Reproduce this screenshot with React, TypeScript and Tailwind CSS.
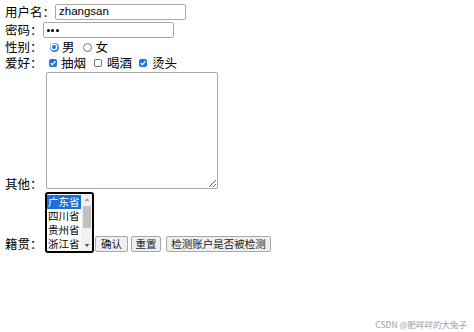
import React from "react";

const FONT = { fontFamily: '"Noto Sans CJK SC", "Noto Sans", sans-serif' };

function Radio({ checked }: { checked?: boolean }) {
  return checked ? (
    <span className="flex items-center justify-center w-[9px] h-[9px] rounded-full bg-[#1a73e8]">
      <span className="block w-[4px] h-[4px] rounded-full bg-[#1a73e8] ring-[1.5px] ring-white" />
    </span>
  ) : (
    <span className="block w-[9px] h-[9px] rounded-full border border-[#767676] bg-white" />
  );
}

function Check({ checked }: { checked?: boolean }) {
  return checked ? (
    <span className="flex items-center justify-center w-[8px] h-[8px] rounded-[2px] bg-[#1a73e8]">
      <svg viewBox="0 0 8 8" className="w-[8px] h-[8px]">
        <path d="M1.6 4.1 L3.3 5.8 L6.4 2.3" fill="none" stroke="white" strokeWidth="1.3" />
      </svg>
    </span>
  ) : (
    <span className="block w-[8px] h-[8px] rounded-[2px] border border-[#767676] bg-white" />
  );
}

function Btn({ w, children }: { w: string; children: React.ReactNode }) {
  return (
    <div
      className={`${w} h-[16px] flex items-center justify-center border border-[#a8a8a8] rounded-[2px] bg-[#efefef] text-[10.5px] text-[#222]`}
    >
      {children}
    </div>
  );
}

const provinces = ["广东省", "四川省", "贵州省", "浙江省"];

export default function App() {
  return (
    <div className="relative w-[474px] h-[332px] bg-white text-black text-[12.5px] leading-none overflow-hidden" style={FONT}>
      <div className="flex flex-col pl-[5px] pt-[4px]">
        {/* 用户名 */}
        <div className="flex items-center h-[16px]">
          <span>用户名：</span>
          <div className="w-[131px] h-[16px] border border-[#a9a9a9] rounded-[2px] flex items-center px-[3px] text-[11.5px]" style={{ fontFamily: '"Liberation Sans", Arial, sans-serif' }}>
            zhangsan
          </div>
        </div>
        {/* 密码 */}
        <div className="flex items-center h-[16px] mt-[2px]">
          <span>密码：</span>
          <div className="w-[131px] h-[16px] border border-[#a9a9a9] rounded-[2px] flex items-center gap-[1.5px] px-[3px]">
            <span className="block w-[3px] h-[3px] rounded-full bg-black" />
            <span className="block w-[3px] h-[3px] rounded-full bg-black" />
            <span className="block w-[3px] h-[3px] rounded-full bg-black" />
          </div>
        </div>
        {/* 性别 */}
        <div className="flex items-center h-[16px] mt-[1px]">
          <span>性别：</span>
          <span className="ml-[7px]"><Radio checked /></span>
          <span className="ml-[3.5px]">男</span>
          <span className="ml-[8.5px]"><Radio /></span>
          <span className="ml-[3.5px]">女</span>
        </div>
        {/* 爱好 */}
        <div className="flex items-center h-[16px]">
          <span>爱好：</span>
          <span className="ml-[6.5px]"><Check checked /></span>
          <span className="ml-[4px]">抽烟</span>
          <span className="ml-[8px]"><Check /></span>
          <span className="ml-[5px]">喝酒</span>
          <span className="ml-[7px]"><Check checked /></span>
          <span className="ml-[5px]">烫头</span>
        </div>
        {/* 其他 */}
        <div className="flex items-end mt-[1px]">
          <span className="mb-[-1px]">其他：</span>
          <textarea
            readOnly
            className="ml-[3.5px] w-[172px] h-[117px] border border-[#a9a9a9] rounded-[2px] resize outline-none"
          />
        </div>
        {/* 籍贯 */}
        <div className="flex items-end mt-[3px]">
          <span className="mb-[3px]">籍贯：</span>
          <div className="ml-[2.5px] w-[49px] h-[61px] border-2 border-black rounded-[3px] flex text-[10.5px]">
            <div className="flex-1 flex flex-col pt-[1px]">
              {provinces.map((p, i) => (
                <div
                  key={p}
                  className={`h-[15px] flex items-center pl-[1px] ${i === 0 ? "bg-[#1a6fd8] text-white" : ""}`}
                >
                  {p}
                </div>
              ))}
            </div>
            <div className="w-[11px] flex flex-col items-center bg-[#f1f1f1]">
              <svg viewBox="0 0 8 6" className="w-[6px] h-[5px] mt-[3px]">
                <path d="M1 5 L4 1 L7 5 Z" fill="#a3a3a3" />
              </svg>
              <div className="w-[8px] h-[22px] mt-[4px] bg-[#c1c1c1]" />
              <div className="flex-1" />
              <svg viewBox="0 0 8 6" className="w-[6px] h-[5px] mb-[3px]">
                <path d="M1 1 L4 5 L7 1 Z" fill="#505050" />
              </svg>
            </div>
          </div>
          <div className="flex items-end gap-[3px] ml-[1px] mb-[1px]">
            <Btn w="w-[33px]">确认</Btn>
            <Btn w="w-[30px]">重置</Btn>
            <div className="ml-[2px]">
              <Btn w="w-[105px]">检测账户是否被检测</Btn>
            </div>
          </div>
        </div>
      </div>
      <div className="absolute right-[7px] bottom-[4px] text-[8.5px] text-[#a0a0a0]">CSDN @肥咩咩的大兔子</div>
    </div>
  );
}
